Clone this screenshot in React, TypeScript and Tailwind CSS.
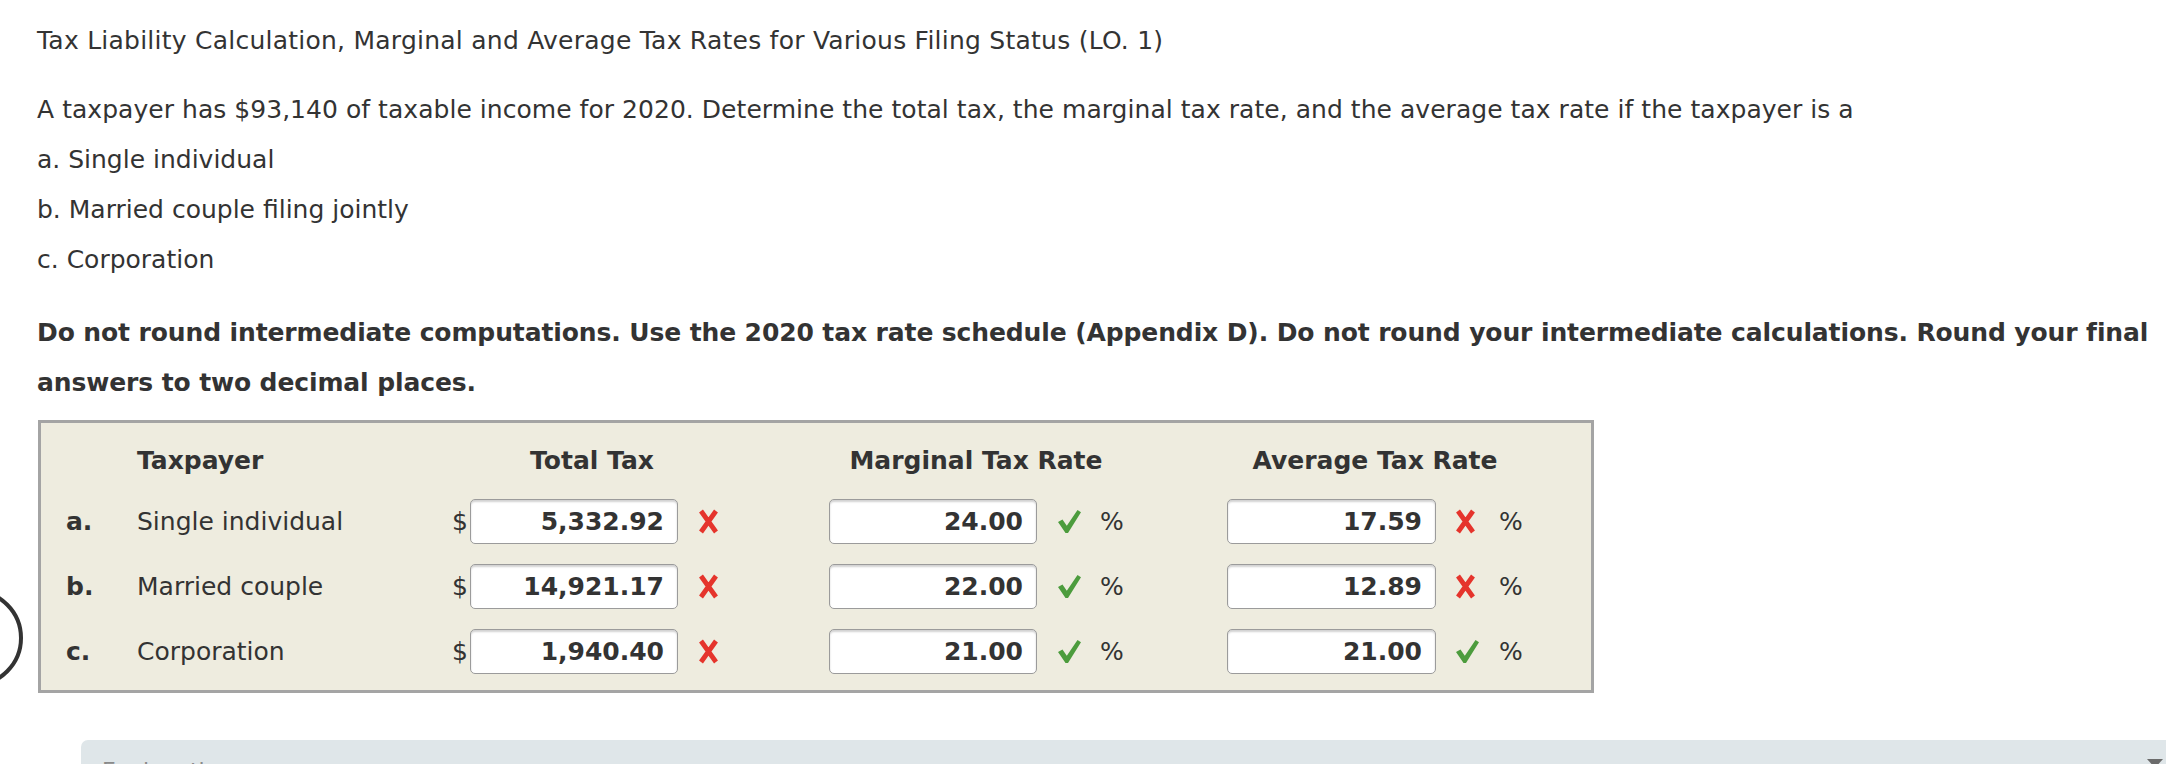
import React from 'react';

type Mark = 'ok' | 'bad';

const rows: { key: string; name: string; total: string; totalMark: Mark; marginal: string; marginalMark: Mark; average: string; averageMark: Mark }[] = [
    { key: 'a.', name: 'Single individual', total: '5,332.92', totalMark: 'bad', marginal: '24.00', marginalMark: 'ok', average: '17.59', averageMark: 'bad' },
    { key: 'b.', name: 'Married couple', total: '14,921.17', totalMark: 'bad', marginal: '22.00', marginalMark: 'ok', average: '12.89', averageMark: 'bad' },
    { key: 'c.', name: 'Corporation', total: '1,940.40', totalMark: 'bad', marginal: '21.00', marginalMark: 'ok', average: '21.00', averageMark: 'ok' },
];

function Cross() {
    return (
        <svg width="21" height="25" viewBox="0 0 21 25" className="block">
            <path d="M3 2 L18 23 M18 2 L3 23" stroke="#e5342c" strokeWidth="4.8" strokeLinecap="butt" fill="none" />
        </svg>
    );
}

function Check() {
    return (
        <svg width="25" height="25" viewBox="0 0 25 25" className="block">
            <path d="M1 13 L5.5 10.5 L9.8 16.8 L20.5 1 L24 3.2 L11 24 L8.5 24 Z" fill="#4c9c3d" />
        </svg>
    );
}

function MarkIcon({ mark }: { mark: Mark }) {
    return mark === 'ok' ? <Check /> : <Cross />;
}

function Field({ value, width }: { value: string; width: string }) {
    return (
        <div className={`${width} h-[45px] bg-white border-[1.5px] border-[#9b9b9b] rounded-[5px] shadow-[inset_0_2px_2px_rgba(0,0,0,0.18)] flex items-center justify-end pr-[13px] font-bold text-[#333]`}>
            {value}
        </div>
    );
}

export default function App() {
    return (
        <div className="relative w-[2166px] h-[764px] overflow-hidden bg-white text-[#333] text-[25px] font-['DejaVu_Sans',Verdana,sans-serif]">
            {/* lingkaran coretan di tepi kiri */}
            <svg width="40" height="110" viewBox="0 0 40 110" className="absolute left-0 top-[583px]">
                <circle cx="-26" cy="55" r="47" stroke="#333" strokeWidth="4" fill="none" />
            </svg>

            <div className="pl-[37px] pt-[16px]">
                <p className="leading-[50px] whitespace-nowrap tracking-[0.24px]">Tax Liability Calculation, Marginal and Average Tax Rates for Various Filing Status (LO. 1)</p>

                <div className="mt-[19px] leading-[50px] whitespace-nowrap">
                    <p className="tracking-[0.04px]">A taxpayer has $93,140 of taxable income for 2020. Determine the total tax, the marginal tax rate, and the average tax rate if the taxpayer is a</p>
                    <p>a. Single individual</p>
                    <p>b. Married couple filing jointly</p>
                    <p>c. Corporation</p>
                </div>

                <p className="mt-[23px] leading-[50px] font-bold whitespace-nowrap tracking-[-0.11px]">
                    Do not round intermediate computations. Use the 2020 tax rate schedule (Appendix D). Do not round your intermediate calculations. Round your final
                    <br />
                    answers to two decimal places.
                </p>

                <div className="mt-[12px] ml-px w-[1556px] border-[3px] border-[#a4a4a4] bg-[#eeecdf] pt-[23px] pb-[16px]">
                    <div className="flex h-[30px] leading-[30px] font-bold">
                        <div className="w-[96px]" />
                        <div className="w-[315px]">Taxpayer</div>
                        <div className="w-[280px] text-center">Total Tax</div>
                        <div className="w-[488px] text-center">Marginal Tax Rate</div>
                        <div className="w-[310px] text-center">Average Tax Rate</div>
                    </div>

                    <div className="mt-[23px] flex flex-col gap-[20px]">
                        {rows.map(r => (
                            <div key={r.key} className="flex items-center h-[45px]">
                                <div className="w-[96px] pl-[25px] font-bold">{r.key}</div>
                                <div className="w-[315px]">{r.name}</div>
                                <div className="w-[18px]">$</div>
                                <Field value={r.total} width="w-[208px]" />
                                <div className="w-[151px] pl-[20px]"><MarkIcon mark={r.totalMark} /></div>
                                <Field value={r.marginal} width="w-[208px]" />
                                <div className="w-[63px] pl-[20px]"><MarkIcon mark={r.marginalMark} /></div>
                                <div className="w-[127px]">%</div>
                                <Field value={r.average} width="w-[209px]" />
                                <div className="w-[63px] pl-[19px]"><MarkIcon mark={r.averageMark} /></div>
                                <div>%</div>
                            </div>
                        ))}
                    </div>
                </div>
            </div>

            <div className="relative mt-[47px] ml-[81px] h-[100px] rounded-tl-[7px] bg-[#dfe6e9] pl-[21px] pt-[16px]">
                <p className="text-[22px] leading-[30px] text-[#8a8a8a]">Explanation</p>
                <div className="absolute right-[3px] top-[19px] w-0 h-0 border-l-[8px] border-r-[8px] border-t-[9px] border-l-transparent border-r-transparent border-t-[#6b6b6b]" />
            </div>
        </div>
    );
}
